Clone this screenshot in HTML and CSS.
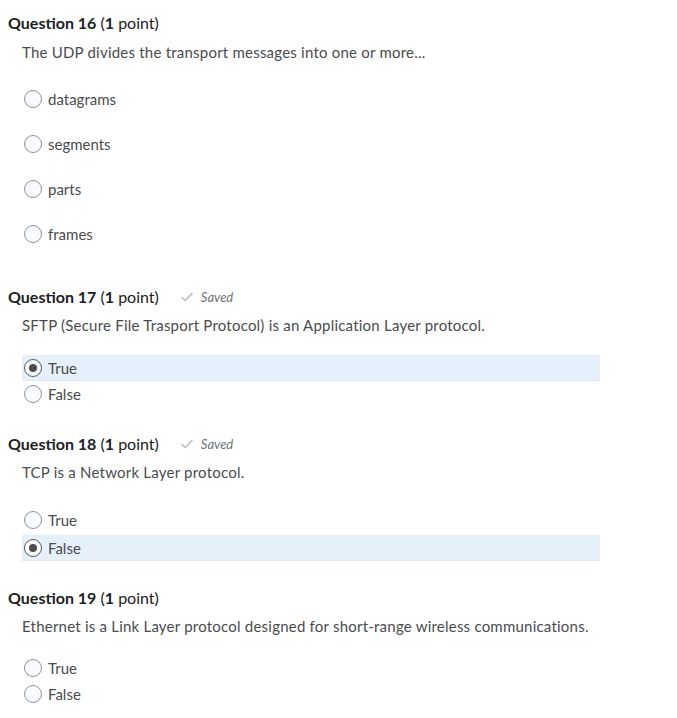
FILE: index.html
```html
<!DOCTYPE html>
<html>
<head>
<meta charset="utf-8">
<link rel="stylesheet" href="styles.css">
</head>
<body>
<div class="quiz">
  <section class="question">
    <div class="q-head"><span class="q-title"><b>Question 16</b> (<b>1</b> point)</span></div>
    <div class="q-text">The UDP divides the transport messages into one or more...</div>
    <div class="opts opts-spaced">
      <label class="opt"><span class="radio"></span><span>datagrams</span></label>
      <label class="opt"><span class="radio"></span><span>segments</span></label>
      <label class="opt"><span class="radio"></span><span>parts</span></label>
      <label class="opt"><span class="radio"></span><span>frames</span></label>
    </div>
  </section>

  <section class="question q17">
    <div class="q-head"><span class="q-title"><b>Question 17</b> (<b>1</b> point)</span>
      <span class="saved"><svg width="12" height="10" viewBox="0 0 12 10"><path d="M1 5.5 L4.2 8.5 L11 1.5" fill="none" stroke="#b9bcbe" stroke-width="1.6" stroke-linecap="round" stroke-linejoin="round"/></svg><i>Saved</i></span>
    </div>
    <div class="q-text">SFTP (Secure File Trasport Protocol) is an Application Layer protocol.</div>
    <div class="opts opts-tf">
      <label class="opt sel"><span class="radio on"></span><span>True</span></label>
      <label class="opt"><span class="radio"></span><span>False</span></label>
    </div>
  </section>

  <section class="question q18">
    <div class="q-head"><span class="q-title"><b>Question 18</b> (<b>1</b> point)</span>
      <span class="saved"><svg width="12" height="10" viewBox="0 0 12 10"><path d="M1 5.5 L4.2 8.5 L11 1.5" fill="none" stroke="#b9bcbe" stroke-width="1.6" stroke-linecap="round" stroke-linejoin="round"/></svg><i>Saved</i></span>
    </div>
    <div class="q-text">TCP is a Network Layer protocol.</div>
    <div class="opts opts-tf opts-gap">
      <label class="opt"><span class="radio"></span><span>True</span></label>
      <label class="opt sel"><span class="radio on"></span><span>False</span></label>
    </div>
  </section>

  <section class="question q19">
    <div class="q-head"><span class="q-title"><b>Question 19</b> (<b>1</b> point)</span></div>
    <div class="q-text">Ethernet is a Link Layer protocol designed for short-range wireless communications.</div>
    <div class="opts opts-tf opts-low">
      <label class="opt"><span class="radio"></span><span>True</span></label>
      <label class="opt"><span class="radio"></span><span>False</span></label>
    </div>
  </section>
</div>
</body>
</html>
```

FILE: styles.css
```css
html, body {
  margin: 0;
  padding: 0;
  background: #ffffff;
}
body {
  font-family: Lato, "Open Sans", "Liberation Sans", sans-serif;
  color: #494c4e;
  font-size: 15px;
}
.quiz {
  padding: 13px 0 0 8px;
}
.question {
  display: flex;
  flex-direction: column;
}
.q17 { margin-top: 40px; }
.q18 { margin-top: 27px; }
.q19 { margin-top: 27px; }

.q-head {
  display: flex;
  align-items: center;
  height: 20px;
  line-height: 20px;
  font-size: 16px;
  color: #202122;
}
.q-title { white-space: pre; }
.q-title b { font-weight: 700; }
.saved {
  display: inline-flex;
  align-items: center;
  margin-left: 22px;
  font-size: 13px;
  color: #6e7376;
}
.saved svg { margin-right: 8px; }
.saved i { font-style: italic; }

.q-text {
  margin: 8px 0 0 14px;
  line-height: 20px;
  height: 20px;
  color: #494c4e;
  letter-spacing: 0.22px;
}
.question:first-child .q-text { margin-top: 9px; }

.opts {
  display: flex;
  flex-direction: column;
  margin-left: 14px;
  width: 578px;
}
.opts-spaced { margin-top: 24px; gap: 19px; }
.opts-tf { margin-top: 20px; }
.opts-gap { margin-top: 25px; gap: 2px; }
.opts-low { margin-top: 19px; }

.opt {
  display: flex;
  align-items: center;
  gap: 6px;
  height: 26px;
  padding-left: 2px;
  color: #494c4e;
}
.opt.sel {
  background: #e6f0fb;
  border-bottom: 1px solid #dfe8f3;
  box-sizing: border-box;
}
.radio {
  box-sizing: border-box;
  width: 18px;
  height: 18px;
  border-radius: 50%;
  border: 1px solid #8f9496;
  background: #f8fafe;
  display: flex;
  align-items: center;
  justify-content: center;
  flex: none;
}
.radio.on {
  border-color: #565a5c;
  background: #fbfbfb;
}
.radio.on::after {
  content: "";
  width: 8px;
  height: 8px;
  border-radius: 50%;
  background: #494c4e;
}
```
